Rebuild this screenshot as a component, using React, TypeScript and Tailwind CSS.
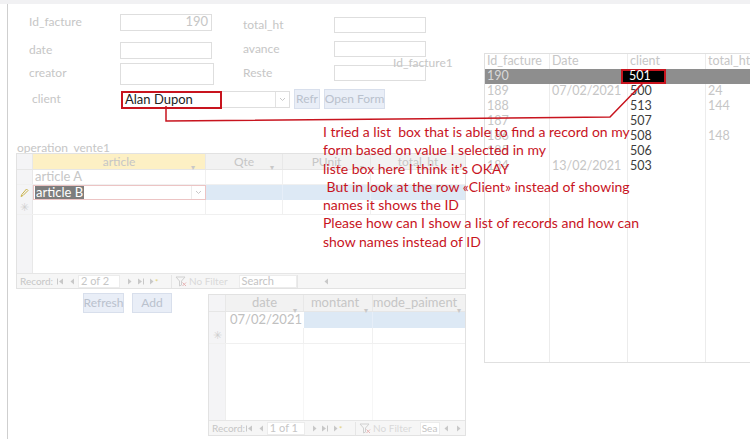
import React from "react";

const G = "text-[#c6c6c6]";

function Tri({ dir, bar = false, star = false }: { dir: "l" | "r"; bar?: boolean; star?: boolean }) {
  return (
    <svg width={star ? 14 : 9} height="9" viewBox={star ? "0 0 14 9" : "0 0 9 9"} className="shrink-0">
      {dir === "l" ? (
        <>
          {bar && <rect x="1" y="1.5" width="1" height="6" fill="#c8c8c8" />}
          <polygon points={bar ? "7,1.5 3,4.5 7,7.5" : "6,1.5 2.5,4.5 6,7.5"} fill="#c8c8c8" />
        </>
      ) : (
        <>
          <polygon points={bar ? "2,1.5 6,4.5 2,7.5" : "3,1.5 6.5,4.5 3,7.5"} fill="#c8c8c8" />
          {bar && <rect x="7" y="1.5" width="1" height="6" fill="#c8c8c8" />}
          {star && <text x="8" y="8" fontSize="8" fill="#e3d37a">*</text>}
        </>
      )}
    </svg>
  );
}

function FilterIcon() {
  return (
    <svg width="12" height="11" viewBox="0 0 12 11" className="shrink-0">
      <polygon points="1,1 10,1 6.5,5 6.5,9 4.5,10 4.5,5" fill="none" stroke="#d0d0d0" strokeWidth="1" />
      <path d="M7.5 6.5 L11 10 M11 6.5 L7.5 10" stroke="#e6b4b4" strokeWidth="1" />
    </svg>
  );
}

function Chevron() {
  return (
    <svg width="7" height="5" viewBox="0 0 7 5">
      <path d="M1 1 L3.5 3.5 L6 1" fill="none" stroke="#c8c8c8" strokeWidth="1" />
    </svg>
  );
}

function HeadArrow() {
  return <span className="text-[8px] leading-none text-[#c8c8c8]">▾</span>;
}

function Input({ w, h, value }: { w: number; h: number; value?: string }) {
  return (
    <div
      className={`border border-[#dedede] bg-white flex items-center justify-end pr-[3px] text-[13px] ${G}`}
      style={{ width: w, height: h }}
    >
      {value}
    </div>
  );
}

function Pencil() {
  return (
    <svg width="9" height="10" viewBox="0 0 9 10">
      <path d="M6.5 1 L8 2.5 L3 7.5 L1 8.5 L1.8 6.5 Z" fill="none" stroke="#c9b24a" strokeWidth="1" />
    </svg>
  );
}

function NavBar({ rec, recW, small }: { rec: string; recW: number; small?: boolean }) {
  return (
    <div className={`h-[15px] flex items-center bg-[#f6f6f6] border-t border-[#e6e6e6] text-[10px] ${G} whitespace-nowrap`}>
      <span className="ml-[3px] w-[36px]">Record:</span>
      <Tri dir="l" bar />
      <span className="w-[3px]" />
      <Tri dir="l" />
      <div className="ml-[1px] h-[13px] bg-white border border-[#ececec] flex items-center pl-[2px] text-[11px]" style={{ width: recW }}>
        {rec}
      </div>
      <span className="w-[5px]" />
      <Tri dir="r" />
      <span className="w-[2px]" />
      <Tri dir="r" bar />
      <span className="w-[2px]" />
      <Tri dir="r" star />
      <div className="ml-[10px] h-[13px] border-l border-[#e6e6e6] pl-[3px] flex items-center gap-[2px] text-[#d9d9d9]">
        <FilterIcon />
        <span>No Filter</span>
      </div>
      {small ? (
        <>
          <div className="ml-[8px] w-[22px] h-[13px] bg-white border border-[#ececec] flex items-center pl-[1px] text-[#c4c4c4]">Sea</div>
          <div className="w-[14px] h-[13px] flex items-center justify-center"><Tri dir="l" /></div>
          <div className="w-[14px] h-[13px] flex items-center justify-center"><Tri dir="r" /></div>
        </>
      ) : (
        <>
          <div className="ml-[11px] w-[58px] h-[13px] bg-white border border-[#ececec] flex items-center pl-[2px] text-[11px] text-[#c4c4c4]">Search</div>
          <div className="flex-1 h-[13px] flex items-center pl-[24px] bg-[#f6f6f6] border-l border-[#e6e6e6]">
            <Tri dir="l" />
          </div>
        </>
      )}
    </div>
  );
}

function Subform1() {
  const cols = [173, 77, 88, 96];
  return (
    <div className="ml-[8px] w-[450px] h-[136px] border border-[#e2e2e2] bg-white flex flex-col text-[12px]">
      <div className="h-[16px] flex bg-[#f2f2f2] border-b border-[#e6e6e6]">
        <div className="w-[16px] bg-[#f4f4f6] border-r border-[#e8e8e8]" />
        <div className="relative flex items-center justify-center bg-[#fdf0c4] border-r border-[#e8e8e8]" style={{ width: cols[0] }}>
          <span className={G}>article</span>
          <span className="absolute right-[10px] top-[3px]"><HeadArrow /></span>
        </div>
        <div className="relative flex items-center justify-center border-r border-[#e8e8e8]" style={{ width: cols[1] }}>
          <span className={G}>Qte</span>
          <span className="absolute right-[8px] top-[3px]"><HeadArrow /></span>
        </div>
        <div className="relative flex items-center justify-center border-r border-[#e8e8e8]" style={{ width: cols[2] }}>
          <span className={G}>PUnit</span>
          <span className="absolute right-[6px] top-[3px]"><HeadArrow /></span>
        </div>
        <div className="relative flex items-center justify-center flex-1">
          <span className={G}>total_ht</span>
        </div>
      </div>
      <div className="h-[15px] flex border-b border-[#f0f0f0] text-[13px]">
        <div className="w-[16px] bg-[#f4f4f6] border-r border-[#e8e8e8]" />
        <div className={`flex items-center pl-[2px] border-r border-[#f0f0f0] ${G}`} style={{ width: cols[0] }}>article A</div>
        <div className="border-r border-[#f0f0f0]" style={{ width: cols[1] }} />
        <div className="border-r border-[#f0f0f0]" style={{ width: cols[2] }} />
        <div className="flex-1" />
      </div>
      <div className="h-[15px] flex text-[13px]">
        <div className="w-[16px] bg-[#f4f4f6] border-r border-[#e8e8e8] flex items-center justify-center"><Pencil /></div>
        <div className="relative flex items-center border border-[#ecc4c4] bg-white pl-[1px]" style={{ width: cols[0] }}>
          <span className="bg-[#7d7d7d] text-white leading-[13px] px-[1px]">article B</span>
          <div className="absolute right-[1px] top-0 h-[13px] w-[13px] border-l border-[#ececec] flex items-center justify-center"><Chevron /></div>
        </div>
        <div className="bg-[#dde9f5] border-r border-[#e6eef8]" style={{ width: cols[1] }} />
        <div className="bg-[#dde9f5] border-r border-[#e6eef8]" style={{ width: cols[2] }} />
        <div className="flex-1 bg-[#dde9f5]" />
      </div>
      <div className="h-[15px] flex border-b border-[#f0f0f0]">
        <div className="w-[16px] bg-[#f4f4f6] border-r border-[#e8e8e8] flex items-center justify-center text-[11px] text-[#cfcfcf]">✳</div>
        <div className="border-r border-[#f0f0f0]" style={{ width: cols[0] }} />
        <div className="border-r border-[#f0f0f0]" style={{ width: cols[1] }} />
        <div className="border-r border-[#f0f0f0]" style={{ width: cols[2] }} />
        <div className="flex-1" />
      </div>
      <div className="flex-1 flex">
        <div className="w-[16px] bg-[#f4f4f6] border-r border-[#e8e8e8]" />
      </div>
      <NavBar rec="2 of 2" recW={42} />
    </div>
  );
}

function Subform2() {
  const cols = [78, 69];
  return (
    <div className="mt-[1px] ml-[36px] w-[258px] h-[142px] border border-[#e2e2e2] bg-white flex flex-col text-[12px]">
      <div className="h-[17px] flex bg-[#f2f2f2] border-b border-[#e6e6e6] text-[13px]">
        <div className="w-[17px] bg-[#f4f4f6] border-r border-[#e8e8e8]" />
        <div className="relative flex items-center justify-center border-r border-[#e8e8e8]" style={{ width: cols[0] }}>
          <span className={G}>date</span>
          <span className="absolute right-[6px] top-[4px]"><HeadArrow /></span>
        </div>
        <div className="relative flex items-center justify-center border-r border-[#e8e8e8]" style={{ width: cols[1] }}>
          <span className={`${G} -ml-[6px]`}>montant</span>
          <span className="absolute right-[4px] top-[4px]"><HeadArrow /></span>
        </div>
        <div className="relative flex items-center justify-center flex-1">
          <span className={`${G} -ml-[8px]`}>mode_paiment</span>
          <span className="absolute right-[4px] top-[4px]"><HeadArrow /></span>
        </div>
      </div>
      <div className="h-[16px] flex">
        <div className="w-[17px] bg-[#f4f4f6] border-r border-[#e8e8e8]" />
        <div className="flex items-center justify-end pr-[2px] bg-white text-[#c0c0c0] text-[13px]" style={{ width: cols[0] }}>07/02/2021</div>
        <div className="bg-[#dde9f5] border-r border-[#e6eef8]" style={{ width: cols[1] }} />
        <div className="flex-1 bg-[#dde9f5]" />
      </div>
      <div className="h-[16px] flex border-b border-[#f0f0f0]">
        <div className="w-[17px] bg-[#f4f4f6] border-r border-[#e8e8e8] flex items-center justify-center text-[11px] text-[#cfcfcf]">✳</div>
        <div className="border-r border-[#f0f0f0]" style={{ width: cols[0] }} />
        <div className="border-r border-[#f0f0f0]" style={{ width: cols[1] }} />
        <div className="flex-1" />
      </div>
      <div className="flex-1 flex">
        <div className="w-[17px] bg-[#f4f4f6] border-r border-[#eeeeee]" />
        <div className="border-r border-[#f6f6f6]" style={{ width: cols[0] }} />
        <div className="border-r border-[#f6f6f6]" style={{ width: cols[1] }} />
      </div>
      <NavBar rec="1 of 1" recW={42} small />
    </div>
  );
}

function ListBox() {
  const rows = [
    ["190", "", "501", ""],
    ["189", "07/02/2021", "500", "24"],
    ["188", "", "513", "144"],
    ["187", "", "507", ""],
    ["186", "", "508", "148"],
    ["185", "", "506", ""],
    ["184", "13/02/2021", "503", ""],
  ];
  const w = [65, 78, 78, 60];
  return (
    <div className="mt-[49px] w-[290px] h-[310px] shrink-0 border border-[#e0e0e0] bg-white relative text-[12.5px]">
      <div className="absolute inset-0 flex pointer-events-none">
        <div className="border-r border-[#ececec]" style={{ width: w[0] }} />
        <div className="border-r border-[#ececec]" style={{ width: w[1] }} />
        <div className="border-r border-[#ececec]" style={{ width: w[2] }} />
      </div>
      <div className="relative h-[15px] flex items-center">
        {["Id_facture", "Date", "client", "total_ht"].map((t, i) => (
          <div key={t} className={`pl-[2px] whitespace-nowrap ${G}`} style={{ width: w[i] }}>{t}</div>
        ))}
      </div>
      {rows.map((r, ri) => (
        <div key={ri} className={`relative h-[15px] flex items-center ${ri === 0 ? "bg-[#8e8e8e]" : ""}`}>
          {r.map((c, ci) => (
            <div
              key={ci}
              className={`pl-[2px] ${
                ri === 0 ? (ci === 2 ? "" : "text-[#d8d8d8]") : ci === 2 ? "text-[#3c3c3c]" : G
              }`}
              style={{ width: w[ci] }}
            >
              {ri === 0 && ci === 2 ? (
                <span className="ml-[-9px] inline-flex items-center h-[15px] w-[45px] bg-black text-white border-2 border-[#c8141e] pl-[6px] leading-none">
                  {c}
                </span>
              ) : (
                c
              )}
            </div>
          ))}
        </div>
      ))}
    </div>
  );
}

const BTN = "h-[20px] bg-[#e9eef7] border border-[#d8dfec] flex items-center justify-center text-[12px] text-[#b9c1cd] whitespace-nowrap";

export default function App() {
  return (
    <div className="w-[750px] h-[439px] relative overflow-hidden bg-white font-['Lato','Noto_Sans',sans-serif]">
      <div className="h-[4px] bg-[#f1f1f3]" />
      <div className="ml-[7px] h-[435px] border-l border-[#cfcfcf] flex">
        <div className="w-[476px] shrink-0 flex flex-col">
          <div className="flex">
            <div className="ml-[21px] flex flex-col">
              <div className="mt-[9px] flex items-center">
                <span className={`w-[91px] text-[12px] ${G}`}>Id_facture</span>
                <Input w={92} h={17} value="190" />
              </div>
              <div className="mt-[10px] flex items-center">
                <span className={`w-[91px] text-[12px] ${G}`}>date</span>
                <Input w={92} h={17} />
              </div>
              <div className="mt-[4px] flex items-start">
                <span className={`w-[91px] text-[12px] ${G} mt-[1px]`}>creator</span>
                <Input w={94} h={22} />
              </div>
            </div>
            <div className="ml-[29px] flex flex-col relative">
              <div className="mt-[12px] flex items-center">
                <span className={`w-[91px] text-[12px] ${G}`}>total_ht</span>
                <Input w={92} h={16} />
              </div>
              <div className="mt-[6px] flex items-center">
                <span className={`w-[91px] text-[12px] ${G}`}>avance</span>
                <Input w={92} h={16} />
              </div>
              <div className="mt-[6px] flex items-center">
                <span className={`w-[91px] text-[12px] ${G}`}>Reste</span>
                <Input w={92} h={16} />
              </div>
              <span className={`absolute left-[150px] top-[50px] text-[12px] ${G} whitespace-nowrap`}>Id_facture1</span>
            </div>
          </div>
          <div className="mt-[4px] h-[20px] flex items-center">
            <span className={`ml-[24px] w-[89px] text-[12px] ${G}`}>client</span>
            <div className="flex h-[17px] w-[169px] border border-[#dedede] bg-white relative">
              <div className="absolute -left-[1px] -top-[1px] w-[101px] h-[18px] border-2 border-[#c8141e] flex items-center pl-[2px] text-[13px] text-[#222]">
                Alan Dupon
              </div>
              <div className="ml-auto w-[14px] h-full border-l border-[#e2e2e2] flex items-center justify-center">
                <Chevron />
              </div>
            </div>
            <div className={`ml-[4px] w-[26px] ${BTN}`}>Refr</div>
            <div className={`ml-[4px] w-[61px] ${BTN}`}>Open Form</div>
          </div>
          <div className={`mt-[33px] ml-[9px] h-[11px] leading-[11px] text-[12px] ${G}`}>operation_vente1</div>
          <Subform1 />
          <div className="mt-[4px] flex items-start">
            <div className={`ml-[75px] w-[41px] ${BTN}`}>Refresh</div>
            <div className={`ml-[8px] w-[40px] ${BTN}`}>Add</div>
            <Subform2 />
          </div>
        </div>
        <ListBox />
      </div>

      <svg className="absolute left-0 top-0 pointer-events-none" width="750" height="439">
        <polyline points="166,106 166,121 610,117 643,83" fill="none" stroke="#c8141e" strokeWidth="1.5" />
      </svg>

      <div className="absolute left-[323px] top-[123px] text-[14px] leading-[18.3px] text-[#c8141e] whitespace-pre">
        {"I tried a list  box that is able to find a record on my\nform based on value I selected in my\nliste box here I think it’s OKAY\n But in look at the row «Client» instead of showing\nnames it shows the ID\nPlease how can I show a list of records and how can\nshow names instead of ID"}
      </div>
    </div>
  );
}
